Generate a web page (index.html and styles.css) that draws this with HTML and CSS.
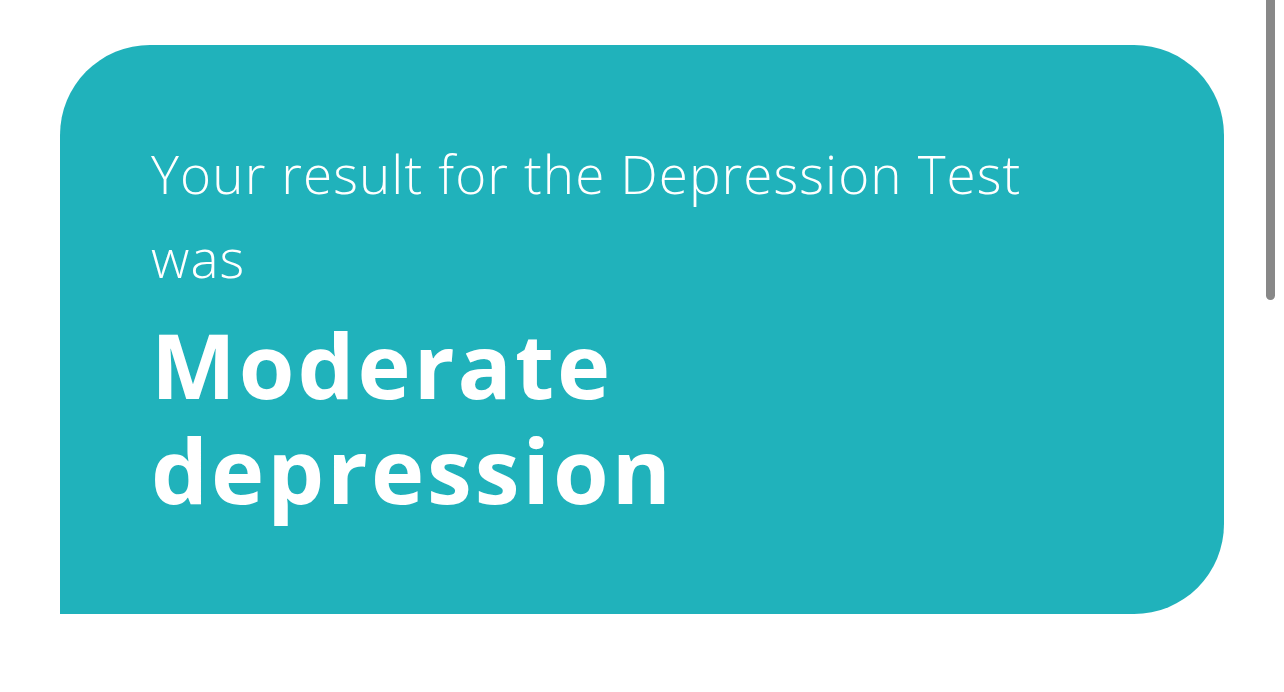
FILE: index.html
```html
<!DOCTYPE html>
<html lang="en">
<head>
<meta charset="utf-8">
<title>Depression Test Result</title>
<link rel="stylesheet" href="styles.css">
</head>
<body>
<main class="page">
  <section class="result-card">
    <p class="result-intro">Your result for the Depression Test was</p>
    <h1 class="result-title">Moderate depression</h1>
  </section>
</main>
<div class="scroll-thumb"></div>
</body>
</html>
```
FILE: styles.css
```css
html, body {
  margin: 0;
  padding: 0;
  background: #ffffff;
}
body {
  font-family: "Open Sans", "Liberation Sans", sans-serif;
  overflow: hidden;
}
.page {
  padding: 45px 60px 0 60px;
}
.result-card {
  background: #20b2bb;
  color: #ffffff;
  border-radius: 90px 90px 90px 0;
  padding: 87px 91px 92px 91px;
  box-sizing: border-box;
  height: 569px;
}
.result-intro {
  margin: 0;
  max-width: 900px;
  font-size: 53px;
  font-weight: 300;
  line-height: 84px;
  letter-spacing: 1.1px;
}
.result-title {
  margin: 12px 0 0 0;
  max-width: 900px;
  font-size: 90px;
  font-weight: 700;
  line-height: 105px;
  letter-spacing: 3px;
}
.scroll-thumb {
  position: fixed;
  top: 0;
  right: 9px;
  width: 9px;
  height: 300px;
  background: #888888;
  border-radius: 0 0 5px 5px;
}
```
